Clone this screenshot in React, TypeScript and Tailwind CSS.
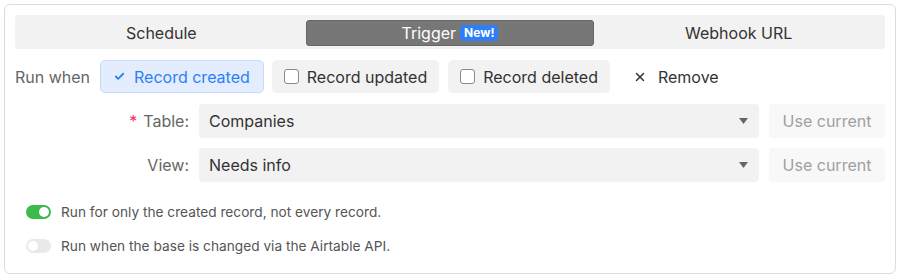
import { Check, X } from 'lucide-react';

const font = { fontFamily: 'Inter, "Noto Sans", sans-serif' };

function Toggle({ on }: { on: boolean }) {
    return (
        <span
            className={`flex h-[14px] w-[25px] items-center rounded-full px-[2px] ${on ? 'justify-end bg-[#3dbb4a]' : 'justify-start bg-[#e9e9e9]'}`}
        >
            <span className="h-[10px] w-[10px] rounded-full bg-white" />
        </span>
    );
}

function CheckOption({ label }: { label: string }) {
    return (
        <button className="flex h-[33px] items-center gap-[8px] rounded-[5px] bg-[#f2f2f2] px-[12px] text-[#333]">
            <span className="h-[15px] w-[15px] rounded-[3px] border border-[#8a8a8a] bg-white" />
            {label}
        </button>
    );
}

function SelectRow({ label, value, required }: { label: string; value: string; required?: boolean }) {
    return (
        <div className="flex items-center gap-[10px]">
            <div className="w-[174px] text-right text-[#666]">
                {required && <span className="mr-[6px] text-[#f82b60]">*</span>}
                {label}
            </div>
            <div className="flex h-[34px] flex-1 items-center justify-between rounded-[4px] bg-[#f2f2f2] pl-[10px] pr-[11px] text-[#333]">
                <span>{value}</span>
                <svg width="9" height="6" viewBox="0 0 9 6">
                    <path d="M0 0h9L4.5 6z" fill="#666" />
                </svg>
            </div>
            <button className="flex h-[34px] w-[116px] items-center justify-center rounded-[4px] bg-[#f8f8f8] text-[#a0a0a0]">
                Use current
            </button>
        </div>
    );
}

export default function App() {
    return (
        <div className="h-[278px] w-[900px] bg-white p-[4px] text-[16px]" style={font}>
            <div className="h-[270px] rounded-[6px] border border-[#dcdcdc] px-[10px] pt-[10px]">
                {/* tabs */}
                <div className="grid h-[34px] grid-cols-3 rounded-[3px] bg-[#f2f2f2] px-[2px] py-[5px] text-[#333]">
                    <div className="flex items-center justify-center">Schedule</div>
                    <div className="flex items-center justify-center gap-[4px] rounded-[3px] border border-[#666] bg-[#777] text-white">
                        Trigger
                        <span className="rounded-[4px] bg-[#2d7ff9] px-[4px] py-[1px] text-[12px] leading-[14px] font-bold">New!</span>
                    </div>
                    <div className="flex items-center justify-center">Webhook URL</div>
                </div>

                {/* run when */}
                <div className="mt-[11px] flex items-center">
                    <span className="mr-[10px] text-[#666]">Run when</span>
                    <button className="flex h-[33px] items-center gap-[9px] rounded-[5px] border border-[#c7dafa] bg-[#e3edfd] px-[13px] text-[#2d7ff9]">
                        <Check size={11} strokeWidth={4} />
                        Record created
                    </button>
                    <div className="ml-[8px] flex gap-[9px]">
                        <CheckOption label="Record updated" />
                        <CheckOption label="Record deleted" />
                    </div>
                    <button className="ml-[13px] flex items-center gap-[11px] px-[10px] text-[#333]">
                        <X size={14} strokeWidth={2.5} />
                        Remove
                    </button>
                </div>

                {/* selects */}
                <div className="mt-[11px] flex flex-col gap-[10px]">
                    <SelectRow label="Table:" value="Companies" required />
                    <SelectRow label="View:" value="Needs info" />
                </div>

                {/* toggles */}
                <div className="mt-[20px] flex flex-col gap-[13px] pl-[11px] text-[13.7px] text-[#555]">
                    <div className="flex items-center gap-[10px]">
                        <Toggle on />
                        Run for only the created record, not every record.
                    </div>
                    <div className="flex items-center gap-[10px]">
                        <Toggle on={false} />
                        Run when the base is changed via the Airtable API.
                    </div>
                </div>
            </div>
        </div>
    );
}
